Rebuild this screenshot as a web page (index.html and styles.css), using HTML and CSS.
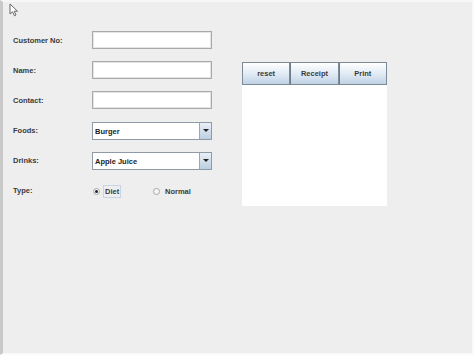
FILE: index.html
```html
<!DOCTYPE html>
<html lang="en">
  <head>
    <meta charset="UTF-8" />
    <title>Restaurant Order</title>
    <link rel="stylesheet" href="styles.css">
  </head>
  <body>
    <div class="window">
      <svg class="cursor" width="10" height="14" viewBox="0 0 10 14">
        <path d="M1 1 L1 11 L3.5 8.8 L5.5 12.8 L7 12 L5.2 8.2 L8.5 8.2 Z" fill="#fff" stroke="#666" stroke-width="1" />
      </svg>

      <div class="content">
        <div class="order-form">
          <label class="label">Customer No:</label>
          <input type="text" class="field" />

          <label class="label">Name:</label>
          <input type="text" class="field" />

          <label class="label">Contact:</label>
          <input type="text" class="field" />

          <label class="label">Foods:</label>
          <div class="combo">
            <span class="combo-value">Burger</span>
            <span class="combo-arrow"></span>
          </div>

          <label class="label">Drinks:</label>
          <div class="combo">
            <span class="combo-value">Apple Juice</span>
            <span class="combo-arrow"></span>
          </div>

          <label class="label">Type:</label>
          <div class="radio-group">
            <span class="radio">
              <span class="radio-circle selected"></span>
              <span class="radio-text focused">Diet</span>
            </span>
            <span class="radio">
              <span class="radio-circle"></span>
              <span class="radio-text">Normal</span>
            </span>
          </div>
        </div>

        <div class="receipt-panel">
          <div class="receipt-buttons">
            <button type="button">reset</button>
            <button type="button">Receipt</button>
            <button type="button">Print</button>
          </div>
          <div class="receipt-area"></div>
        </div>
      </div>
    </div>
  </body>
</html>
```

FILE: styles.css
```css
* {
  box-sizing: border-box;
}

body {
  margin: 0;
  width: 474px;
  height: 355px;
  background-color: #eeeeee;
  font-family: "Liberation Sans", Arial, sans-serif;
  font-size: 7.5px;
  font-weight: bold;
  color: #3a3a3a;
}

.window {
  position: relative;
  width: 474px;
  height: 355px;
  border-top: 2px solid #f7f7f7;
  border-left: 3px solid #c9c9c9;
  border-right: 2px solid #fafafa;
  border-bottom: 2px solid #fafafa;
  background-color: #eeeeee;
}

.cursor {
  position: absolute;
  left: 6px;
  top: 1px;
}

.content {
  display: flex;
  align-items: flex-start;
  padding-top: 29px;
  padding-left: 10px;
}

.order-form {
  display: grid;
  grid-template-columns: 79px 120px;
  grid-template-rows: 18px 18px 18px 18px 18px 18px;
  row-gap: 12px;
  align-items: center;
}

.label {
  color: #3a3a3a;
}

.field {
  width: 120px;
  height: 18px;
  margin: 0;
  padding: 0 3px;
  background-color: #ffffff;
  border: 1px solid #a9a9a9;
  box-shadow: inset 0 0 0 1px #e4e4e4;
  outline: none;
}

.combo {
  display: flex;
  height: 18px;
  margin-top: 2px;
  background-color: #ffffff;
  border: 1px solid #8e9aa5;
}

.combo-value {
  flex: 1;
  display: flex;
  align-items: center;
  padding-left: 2px;
  color: #222222;
}

.combo-arrow {
  position: relative;
  width: 12px;
  border-left: 1px solid #9aa8b6;
  background: linear-gradient(#e9f0f7, #bccfe1);
}

.combo-arrow::after {
  content: "";
  position: absolute;
  left: 3px;
  top: 6px;
  border-left: 3px solid transparent;
  border-right: 3px solid transparent;
  border-top: 3px solid #222222;
}

.radio-group {
  display: flex;
  align-items: center;
  margin-top: 2px;
}

.radio {
  display: flex;
  align-items: center;
  width: 62px;
  padding-left: 1px;
}

.radio-circle {
  position: relative;
  width: 7px;
  height: 7px;
  margin-right: 3px;
  border: 1px solid #a0a8b0;
  border-radius: 50%;
  background-color: #f6f6f6;
}

.radio-circle.selected::after {
  content: "";
  position: absolute;
  left: 1px;
  top: 1px;
  width: 3px;
  height: 3px;
  border-radius: 50%;
  background-color: #222222;
}

.radio-text {
  padding: 1px 1px;
  border: 1px solid transparent;
}

.radio-text.focused {
  border-color: #c9d5e2;
}

.receipt-panel {
  display: flex;
  flex-direction: column;
  width: 145px;
  margin-top: 31px;
  margin-left: 30px;
}

.receipt-buttons {
  display: flex;
}

button {
  flex: 1;
  height: 23px;
  margin: 0;
  padding: 0;
  font-family: inherit;
  font-size: 7.5px;
  font-weight: bold;
  color: #3a3a3a;
  border: 1px solid #7d8a97;
  background: linear-gradient(#ffffff, #dce7f2 60%, #bfd2e4);
  cursor: pointer;
}

button + button {
  border-left: 1px solid #6e7b88;
}

.receipt-area {
  height: 121px;
  background-color: #ffffff;
}
```
